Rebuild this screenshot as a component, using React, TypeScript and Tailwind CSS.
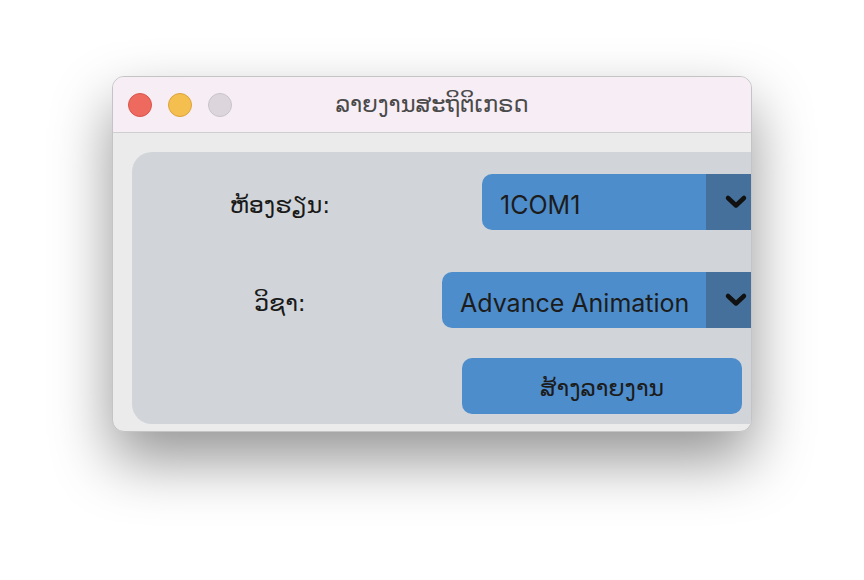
import { useState } from "react";

const laoFont = { fontFamily: '"DejaVu Sans", "Noto Sans", sans-serif' };
const latinFont = { fontFamily: 'Inter, "Liberation Sans", sans-serif' };

const Chevron = () => (
  <svg width="24" height="16" viewBox="0 0 24 16" fill="none">
    <polyline
      points="4,4 12,11.5 20,4"
      stroke="#111"
      strokeWidth="4.5"
      strokeLinecap="round"
      strokeLinejoin="round"
    />
  </svg>
);

const Combo = ({ value, className }: { value: string; className: string }) => (
  <div className={`flex h-[56px] overflow-hidden rounded-l-[10px] bg-[#4e8dcb] ${className}`}>
    <div className="flex flex-1 items-center pl-[18px] pt-[7px] text-[25px] text-[#1c1c1c]" style={latinFont}>
      {value}
    </div>
    <div className="flex w-[56px] items-center pl-[18px] bg-[#44709b]">
      <Chevron />
    </div>
  </div>
);

const App = () => {
  const [room] = useState("1COM1");
  const [subject] = useState("Advance Animation");

  return (
    <div className="flex h-[580px] w-[864px] justify-center bg-white pt-[76px]">
      <div className="flex h-[356px] w-[640px] flex-col overflow-hidden rounded-[12px] border border-[#c4c4c4] bg-[#ebebeb] shadow-[0_28px_60px_rgba(0,0,0,0.42)]">
        {/* title bar */}
        <div className="relative flex h-[56px] shrink-0 items-center border-b border-[#cfcfcf] bg-[#f7edf5] px-[15px]">
          <div className="flex gap-[16px]">
            <span className="h-[24px] w-[24px] rounded-full border border-[#d9534a] bg-[#ee6a5f]" />
            <span className="h-[24px] w-[24px] rounded-full border border-[#dca33a] bg-[#f5bf4f]" />
            <span className="h-[24px] w-[24px] rounded-full border border-[#c9c3cb] bg-[#dcd6dc]" />
          </div>
          <div
            className="absolute inset-x-0 top-0 flex h-full items-center justify-center text-[22.5px] text-[#4a4a4a]"
            style={laoFont}
          >
            ລາຍງານສະຖິຕິເກຣດ
          </div>
        </div>

        {/* content */}
        <div className="flex-1 pl-[19px] pt-[19px]">
          <div className="flex h-[272px] w-[660px] flex-col rounded-[20px] bg-[#d1d5d9] pt-[22px]">
            <div className="flex items-center">
              <div className="w-[296px] pt-[8px] text-center text-[23.5px] text-[#1a1a1a]" style={laoFont}>
                ຫ້ອງຮຽນ:
              </div>
              <Combo value={room} className="ml-[54px] w-[280px]" />
            </div>
            <div className="mt-[42px] flex items-center">
              <div className="w-[296px] pt-[8px] text-center text-[23.5px] text-[#1a1a1a]" style={laoFont}>
                ວິຊາ:
              </div>
              <Combo value={subject} className="ml-[14px] w-[320px]" />
            </div>
            <div className="mt-[30px] flex">
              <div className="w-[330px]" />
              <button
                className="flex h-[56px] w-[280px] items-center justify-center rounded-[10px] bg-[#4e8dcb] pt-[5px] text-[23.5px] text-[#1c1c1c]"
                style={laoFont}
              >
                ສ້າງລາຍງານ
              </button>
            </div>
          </div>
        </div>
      </div>
    </div>
  );
};

export default App;
